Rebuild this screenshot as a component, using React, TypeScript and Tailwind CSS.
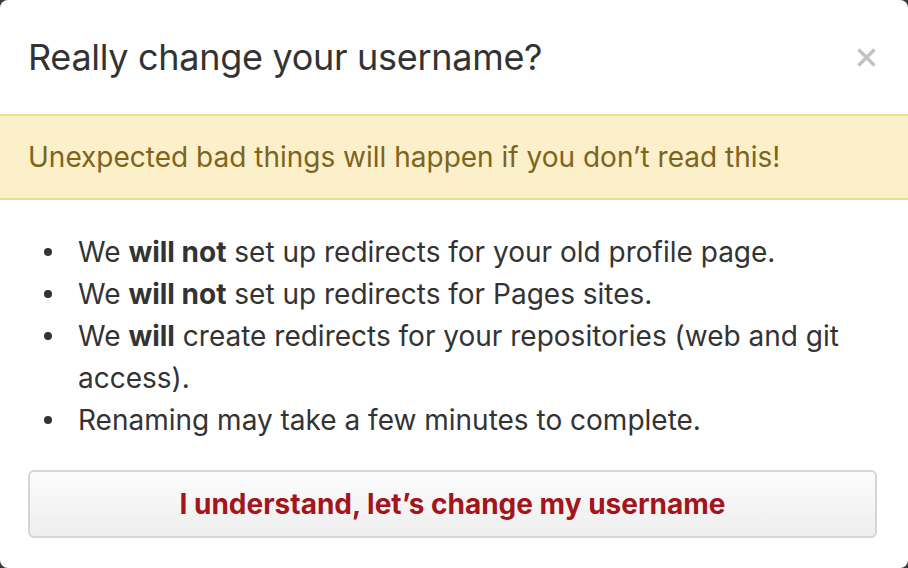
import React from "react";

const warnings = [
  { pre: "We ", strong: "will not", post: " set up redirects for your old profile page." },
  { pre: "We ", strong: "will not", post: " set up redirects for Pages sites." },
  { pre: "We ", strong: "will", post: " create redirects for your repositories (web and git access)." },
  { pre: "", strong: "", post: "Renaming may take a few minutes to complete." },
];

export default function App() {
  return (
    <div className="h-[568px] w-[908px] bg-[#3b3b3b] overflow-hidden">
      <div
        className="h-full w-full rounded-[8px] bg-white flex flex-col text-[#333]"
        style={{ fontFamily: "Inter, 'Noto Sans', sans-serif" }}
      >
        {/* Header */}
        <div className="h-[114px] flex items-center justify-between pl-[28px] pr-[31px]">
          <h2 className="text-[36px] font-normal tracking-[-0.3px]">Really change your username?</h2>
          <button className="text-[#c2c2c2]" aria-label="Close">
            <svg width="21" height="21" viewBox="0 0 21 21">
              <path d="M2.5 2.5 L18.5 18.5 M18.5 2.5 L2.5 18.5" stroke="currentColor" strokeWidth="3.4" />
            </svg>
          </button>
        </div>

        {/* Warning flash */}
        <div className="h-[86px] flex items-center px-[28px] bg-[#fbf0ca] border-y-2 border-[#f1dc93] text-[#7e641c] text-[28px]">
          Unexpected bad things will happen if you don’t read this!
        </div>

        {/* Details */}
        <div className="flex-1 flex flex-col px-[28px] pt-[31px]">
          <ul className="text-[28px] leading-[42px] text-[#333]">
            {warnings.map((w, i) => (
              <li key={i} className="flex">
                <span className="w-[50px] shrink-0 flex items-start pt-[17px]">
                  <span className="ml-[16px] h-[8px] w-[8px] rounded-full bg-[#333]" />
                </span>
                <span>
                  {w.pre}
                  {w.strong && <strong className="font-bold">{w.strong}</strong>}
                  {w.post}
                </span>
              </li>
            ))}
          </ul>

          <button className="mt-[29px] mr-[3px] h-[68px] rounded-[6px] border-2 border-[#d5d5d5] bg-gradient-to-b from-[#fcfcfc] to-[#eeeeee] text-[28px] font-bold text-[#a3151b]">
            I understand, let’s change my username
          </button>
        </div>
      </div>
    </div>
  );
}
